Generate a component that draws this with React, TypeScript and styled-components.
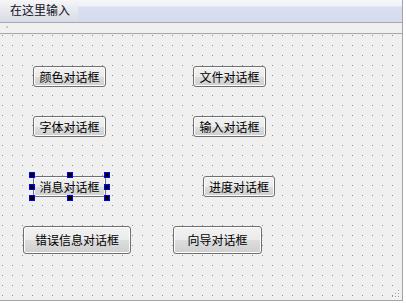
import React from 'react';
import styled, {createGlobalStyle} from "styled-components";

type Control = {
    label: string
    x: number
    y: number
    w: number
    h: number
    selected?: boolean
}

const controls: Control[] = [
    {label: "颜色对话框", x: 33, y: 32, w: 73, h: 21},
    {label: "文件对话框", x: 193, y: 32, w: 73, h: 21},
    {label: "字体对话框", x: 33, y: 82, w: 73, h: 21},
    {label: "输入对话框", x: 193, y: 82, w: 73, h: 21},
    {label: "消息对话框", x: 33, y: 142, w: 73, h: 21, selected: true},
    {label: "进度对话框", x: 203, y: 142, w: 72, h: 21},
    {label: "错误信息对话框", x: 23, y: 192, w: 108, h: 28},
    {label: "向导对话框", x: 173, y: 192, w: 89, h: 28},
];

const handleSpots = [
    [0, 0], [0.5, 0], [1, 0],
    [0, 0.5], [1, 0.5],
    [0, 1], [0.5, 1], [1, 1],
];

export default function App() {
    return <>
        <GlobalStyle/>
        <Frame>
            <TitleBar>
                <Tab>在这里输入</Tab>
            </TitleBar>
            <Divider/>
            <Strip>
                <StripMark/>
            </Strip>
            <Divider/>
            <Canvas>
                {controls.map((c) =>
                    <PushButton key={c.label} $x={c.x} $y={c.y} $w={c.w} $h={c.h}>
                        {c.label}
                    </PushButton>
                )}
                {controls.filter(c => c.selected).map((c) =>
                    handleSpots.map(([fx, fy], i) =>
                        <Handle key={c.label + i}
                                $x={Math.round(c.x - 4 + fx * (c.w + 2))}
                                $y={Math.round(c.y - 4 + fy * (c.h + 2))}/>
                    )
                )}
                <Grip width="8" height="9" viewBox="0 0 8 9">
                    <rect x="6" y="0" width="1" height="1" fill="#9a9a9a"/>
                    <rect x="6" y="1" width="1" height="1" fill="#ffffff"/>
                    <rect x="3" y="3" width="1" height="1" fill="#9a9a9a"/>
                    <rect x="6" y="3" width="1" height="1" fill="#9a9a9a"/>
                    <rect x="3" y="4" width="1" height="1" fill="#ffffff"/>
                    <rect x="6" y="4" width="1" height="1" fill="#ffffff"/>
                    <rect x="0" y="6" width="1" height="1" fill="#9a9a9a"/>
                    <rect x="3" y="6" width="1" height="1" fill="#9a9a9a"/>
                    <rect x="6" y="6" width="1" height="1" fill="#9a9a9a"/>
                    <rect x="0" y="7" width="1" height="1" fill="#ffffff"/>
                    <rect x="3" y="7" width="1" height="1" fill="#ffffff"/>
                    <rect x="6" y="7" width="1" height="1" fill="#ffffff"/>
                </Grip>
            </Canvas>
        </Frame>
    </>;
}

const GlobalStyle = createGlobalStyle`
  body {
    margin: 0;
    background: #ffffff;
    font-family: "Noto Sans CJK SC", "Liberation Sans", sans-serif;
  }
`

const Frame = styled.div`
  width: 402px;
  height: 300px;
  display: flex;
  flex-direction: column;
  background: #f0f0f0;
  border-right: 1px solid #a4a4a4;
  border-bottom: 1px solid #a4a4a4;
`

const TitleBar = styled.div`
  height: 22px;
  display: flex;
  background: linear-gradient(to bottom, #f4f6fb 0, #eef1f8 6px, #d9dff0 7px, #d5dcef 100%);
`

const Tab = styled.div`
  width: 68px;
  height: 20px;
  padding-left: 10px;
  font-size: 12px;
  line-height: 20px;
  color: #111122;
  background: linear-gradient(to bottom, #f6f6f8 0, #e9eaef 45%, #dcdee6 100%);
`

const Divider = styled.div`
  height: 1px;
  background: #a8a8a8;
`

const Strip = styled.div`
  height: 10px;
  position: relative;
  background: #f0f0f0;
`

const StripMark = styled.div`
  position: absolute;
  left: 6px;
  top: 3px;
  width: 2px;
  height: 2px;
  background: #c8c8c8;
`

const Canvas = styled.div`
  flex: 1;
  position: relative;
  background-color: #f0f0f0;
  background-image: linear-gradient(to right, transparent 1px, #f0f0f0 1px),
  linear-gradient(to bottom, #8e8e8e 1px, #f0f0f0 1px);
  background-size: 10px 10px;
  background-position: 2px 1px;
`

const PushButton = styled.button<{ $x: number, $y: number, $w: number, $h: number }>`
  position: absolute;
  left: ${p => p.$x}px;
  top: ${p => p.$y}px;
  width: ${p => p.$w}px;
  height: ${p => p.$h}px;
  box-sizing: border-box;
  margin: 0;
  padding: 0;
  border: 1px solid #707070;
  border-radius: 3px;
  box-shadow: inset 0 0 0 1px #fcfcfc;
  background: linear-gradient(to bottom, #f2f2f2 0, #ebebeb 50%, #dddddd 51%, #cfcfcf 100%);
  font-family: "Noto Sans CJK SC", "Liberation Sans", sans-serif;
  font-size: 12px;
  line-height: 1;
  color: #000000;
  white-space: nowrap;
`

const Handle = styled.div<{ $x: number, $y: number }>`
  position: absolute;
  left: ${p => p.$x}px;
  top: ${p => p.$y}px;
  width: 6px;
  height: 6px;
  box-sizing: border-box;
  background: #000000;
  border: 1px solid #0000ff;
`

const Grip = styled.svg`
  position: absolute;
  right: 2px;
  bottom: 1px;
`
